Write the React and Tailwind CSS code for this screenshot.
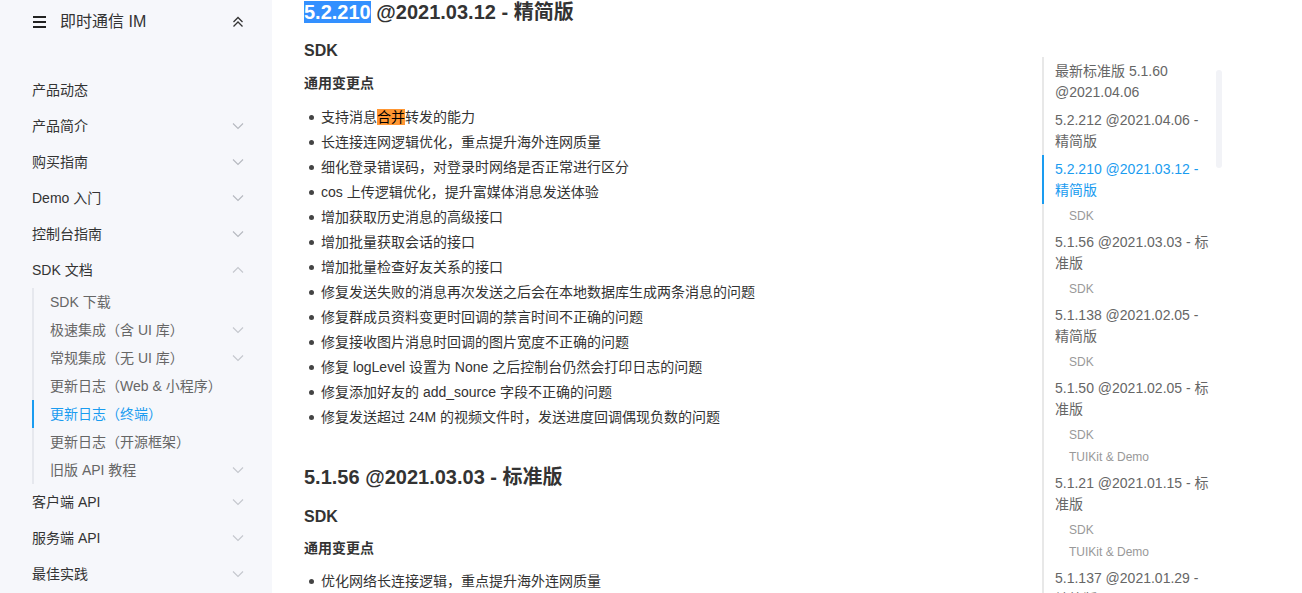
import React from 'react';

const font = { fontFamily: '"Liberation Sans", "Noto Sans CJK SC", sans-serif' };

function ChevronDown({ className = '' }) {
  return (
    <svg width="12" height="8" viewBox="0 0 12 8" className={className} fill="none">
      <polyline points="1,1.5 6,6.5 11,1.5" stroke="currentColor" strokeWidth="1.1" />
    </svg>
  );
}

function ChevronUp({ className = '' }) {
  return (
    <svg width="12" height="8" viewBox="0 0 12 8" className={className} fill="none">
      <polyline points="1,6.5 6,1.5 11,6.5" stroke="currentColor" strokeWidth="1.1" />
    </svg>
  );
}

function DoubleUp() {
  return (
    <svg width="12" height="12" viewBox="0 0 12 12" fill="none" className="text-[#333]">
      <polyline points="1.5,6 6,1.5 10.5,6" stroke="currentColor" strokeWidth="1.3" />
      <polyline points="1.5,10.5 6,6 10.5,10.5" stroke="currentColor" strokeWidth="1.3" />
    </svg>
  );
}

const topMenu = [
  { label: '产品动态', arrow: false },
  { label: '产品简介', arrow: true },
  { label: '购买指南', arrow: true },
  { label: 'Demo 入门', arrow: true },
  { label: '控制台指南', arrow: true },
];

const subMenu = [
  { label: 'SDK 下载', arrow: false },
  { label: '极速集成（含 UI 库）', arrow: true },
  { label: '常规集成（无 UI 库）', arrow: true },
  { label: '更新日志（Web & 小程序）', arrow: false },
  { label: '更新日志（终端）', arrow: false, active: true },
  { label: '更新日志（开源框架）', arrow: false },
  { label: '旧版 API 教程', arrow: true },
];

const bottomMenu = ['客户端 API', '服务端 API', '最佳实践'];

const changes = [
  null,
  '长连接连网逻辑优化，重点提升海外连网质量',
  '细化登录错误码，对登录时网络是否正常进行区分',
  'cos 上传逻辑优化，提升富媒体消息发送体验',
  '增加获取历史消息的高级接口',
  '增加批量获取会话的接口',
  '增加批量检查好友关系的接口',
  '修复发送失败的消息再次发送之后会在本地数据库生成两条消息的问题',
  '修复群成员资料变更时回调的禁言时间不正确的问题',
  '修复接收图片消息时回调的图片宽度不正确的问题',
  '修复 logLevel 设置为 None 之后控制台仍然会打印日志的问题',
  '修复添加好友的 add_source 字段不正确的问题',
  '修复发送超过 24M 的视频文件时，发送进度回调偶现负数的问题',
];

const toc = [
  { title: ['最新标准版 5.1.60', '@2021.04.06'], subs: [] },
  { title: ['5.2.212 @2021.04.06 -', '精简版'], subs: [] },
  { title: ['5.2.210 @2021.03.12 -', '精简版'], subs: ['SDK'], active: true },
  { title: ['5.1.56 @2021.03.03 - 标', '准版'], subs: ['SDK'] },
  { title: ['5.1.138 @2021.02.05 -', '精简版'], subs: ['SDK'] },
  { title: ['5.1.50 @2021.02.05 - 标', '准版'], subs: ['SDK', 'TUIKit & Demo'] },
  { title: ['5.1.21 @2021.01.15 - 标', '准版'], subs: ['SDK', 'TUIKit & Demo'] },
  { title: ['5.1.137 @2021.01.29 -', '精简版'], subs: [] },
];

function Bullet({ children }) {
  return (
    <li className="flex items-center h-[25px] text-[14px] text-[#333]">
      <span className="w-[5px] h-[5px] rounded-full bg-[#444] ml-[5px] mr-[7px] shrink-0"></span>
      <span>{children}</span>
    </li>
  );
}

function Sidebar() {
  return (
    <aside className="w-[272px] shrink-0 h-[593px] bg-[#f6f7fb] overflow-hidden">
      <div className="flex items-center h-[44px] pl-[33px] pr-[28px]">
        <div className="flex flex-col gap-[3px] w-[13px]">
          <span className="h-[2px] bg-[#222]"></span>
          <span className="h-[2px] bg-[#222]"></span>
          <span className="h-[2px] bg-[#222]"></span>
        </div>
        <span className="ml-[14px] text-[16px] text-[#333]">即时通信 IM</span>
        <span className="ml-auto"><DoubleUp /></span>
      </div>
      <nav className="mt-[28px] text-[14px]">
        {topMenu.map((m) => (
          <div key={m.label} className="flex items-center h-[36px] pl-[32px] pr-[28px] text-[#333]">
            <span>{m.label}</span>
            {m.arrow && <ChevronDown className="ml-auto text-[#b5b8bf]" />}
          </div>
        ))}
        <div className="flex items-center h-[36px] pl-[32px] pr-[28px] text-[#333]">
          <span>SDK 文档</span>
          <ChevronUp className="ml-auto text-[#c4c7cd]" />
        </div>
        <div className="ml-[32px] border-l-2 border-[#e6e8ee]">
          {subMenu.map((m) => (
            <div
              key={m.label}
              className={
                'flex items-center h-[28px] pl-[16px] pr-[28px] -ml-[2px] border-l-2 ' +
                (m.active ? 'border-[#1a9cf0] text-[#1a9cf0]' : 'border-transparent text-[#666]')
              }
            >
              <span>{m.label}</span>
              {m.arrow && <ChevronDown className="ml-auto text-[#c4c7cd]" />}
            </div>
          ))}
        </div>
        {bottomMenu.map((m) => (
          <div key={m} className="flex items-center h-[36px] pl-[32px] pr-[28px] text-[#333]">
            <span>{m}</span>
            <ChevronDown className="ml-auto text-[#c4c7cd]" />
          </div>
        ))}
      </nav>
    </aside>
  );
}

function Content() {
  return (
    <main className="flex-1 pl-[32px] pr-[20px] h-[593px] overflow-hidden">
      <h2 className="text-[20px] leading-[24px] font-bold text-[#333] mb-[15px]">
        <span className="bg-[#3390ff] text-white">5.2.210</span> @2021.03.12 - 精简版
      </h2>
      <h3 className="text-[16px] leading-[24px] font-bold text-[#333] mb-[9px]">SDK</h3>
      <h4 className="text-[14px] leading-[22px] font-bold text-[#333] mb-[11px]">通用变更点</h4>
      <ul className="mb-[35px]">
        {changes.map((c, i) =>
          i === 0 ? (
            <Bullet key={i}>
              支持消息<span className="bg-[#ff9632] text-black">合并</span>转发的能力
            </Bullet>
          ) : (
            <Bullet key={i}>{c}</Bullet>
          )
        )}
      </ul>
      <h2 className="text-[20px] leading-[24px] font-bold text-[#333] mb-[16px]">5.1.56 @2021.03.03 - 标准版</h2>
      <h3 className="text-[16px] leading-[24px] font-bold text-[#333] mb-[8px]">SDK</h3>
      <h4 className="text-[14px] leading-[22px] font-bold text-[#333] mb-[10px]">通用变更点</h4>
      <ul>
        <Bullet>优化网络长连接逻辑，重点提升海外连网质量</Bullet>
      </ul>
    </main>
  );
}

function Toc() {
  return (
    <div className="w-[260px] shrink-0 h-[593px] pt-[57px] overflow-hidden">
      <div className="relative w-[182px] border-l-2 border-[#e8e8e8]">
        <div className="absolute right-[2px] top-[13px] w-[6px] h-[98px] rounded bg-[#f2f3f7]"></div>
        {toc.map((t) => (
          <div key={t.title.join('')}>
            <div
              className={
                'py-[3.5px] pl-[11px] pr-[10px] -ml-[2px] border-l-2 text-[14px] leading-[21px] whitespace-nowrap ' +
                (t.active ? 'border-[#1a9cf0] text-[#1a9cf0]' : 'border-transparent text-[#666]')
              }
            >
              <div>{t.title[0]}</div>
              <div>{t.title[1]}</div>
            </div>
            {t.subs.length > 0 && (
              <div className="py-[1px]">
                {t.subs.map((s) => (
                  <div key={s} className="pl-[25px] text-[12px] leading-[22px] text-[#999] whitespace-nowrap">{s}</div>
                ))}
              </div>
            )}
          </div>
        ))}
      </div>
    </div>
  );
}

export default function App() {
  return (
    <div className="flex w-[1302px] h-[593px] bg-white overflow-hidden" style={font}>
      <Sidebar />
      <Content />
      <Toc />
    </div>
  );
}
